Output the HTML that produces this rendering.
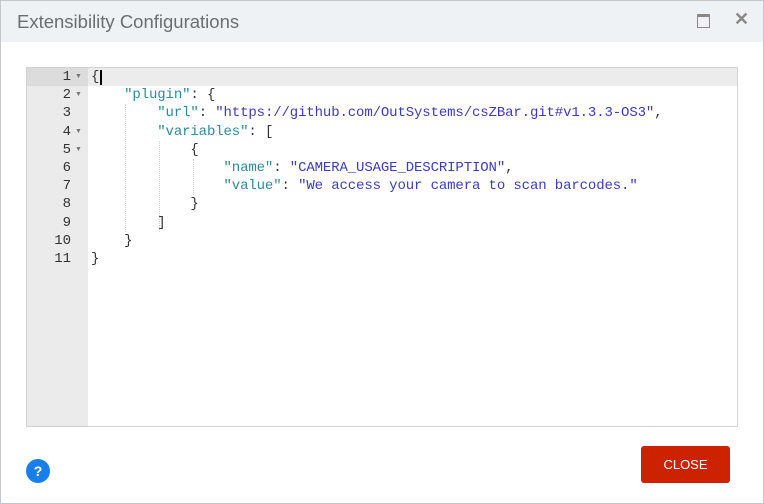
<!DOCTYPE html>
<html><head><style>
html,body{margin:0;padding:0;width:764px;height:504px;overflow:hidden;background:#fff;font-family:"Liberation Sans",sans-serif}
.frame{position:absolute;left:0;top:0;width:762px;height:502px;border:1px solid #c4c8cc;background:#fff}
.hdr{position:absolute;left:0;top:0;width:762px;height:41px;background:#eef2f5}
.title{position:absolute;left:16px;top:10px;font-size:18.5px;color:#6b6f73}
.ed{position:absolute;left:25px;top:66px;width:710px;height:358px;border:1px solid #cfd3d6;background:#fff;overflow:hidden}
.gut{position:absolute;left:0;top:0;width:61px;height:100%;background:#ebebeb}
.act{position:absolute;left:0;top:0;width:100%;height:18px;background:#ececec}
.ln{position:absolute;left:0;width:44px;text-align:right;font:14px/18.2px "Liberation Mono",monospace;color:#333}
.fold{position:absolute;left:48px;font-size:7px;color:#777}
pre{position:absolute;left:64px;top:0;margin:0;font:14px/18.2px "Liberation Mono",monospace;color:#333;letter-spacing:-0.12px}
.k{color:#2c8a99}.s{color:#3b3bbd}
.g{position:absolute;border-left:1px dotted #d0d0d0}
.btn{position:absolute;left:640px;top:445px;width:89px;height:37px;background:#cc2200;border-radius:3px;color:#fff;font-size:13px;text-align:center;line-height:37px}
.help{position:absolute;left:25px;top:458px;width:24px;height:24px;border-radius:50%;background:#1a7ee8;color:#fff;font-weight:bold;font-size:14px;text-align:center;line-height:24px}
</style></head><body>
<div class="frame">
<div class="hdr"><div class="title">Extensibility Configurations</div>
<div style="position:absolute;left:696px;top:13px;width:11px;height:10px;border:1px solid #888;border-top-width:3px"></div>
<div style="position:absolute;left:733px;top:8px;font-size:18px;font-weight:bold;color:#888">✕</div>
</div>
<div class="ed">
<div class="act"></div>
<div class="gut"></div>
<div class="ln" style="top:0;background:#dcdcdc;width:61px;text-align:left"><span style="display:inline-block;width:44px;text-align:right">1</span></div>
<div class="ln" style="top:18.2px">2</div><div class="ln" style="top:36.4px">3</div><div class="ln" style="top:54.6px">4</div><div class="ln" style="top:72.8px">5</div><div class="ln" style="top:91px">6</div><div class="ln" style="top:109.2px">7</div><div class="ln" style="top:127.4px">8</div><div class="ln" style="top:145.6px">9</div><div class="ln" style="top:163.8px">10</div><div class="ln" style="top:182px">11</div>
<div class="fold" style="top:5px">▼</div><div class="fold" style="top:23px">▼</div><div class="fold" style="top:60px">▼</div><div class="fold" style="top:78px">▼</div>
<div class="g" style="left:98px;top:36px;height:128px"></div>
<div class="g" style="left:132px;top:73px;height:91px"></div>
<div class="g" style="left:166px;top:91px;height:36px"></div>
<div style="position:absolute;left:73px;top:2px;width:2px;height:15px;background:#000"></div>
<pre>{
    <span class="k">"plugin"</span>: {
        <span class="k">"url"</span>: <span class="s">"https://github.com/OutSystems/csZBar.git#v1.3.3-OS3"</span>,
        <span class="k">"variables"</span>: [
            {
                <span class="k">"name"</span>: <span class="s">"CAMERA_USAGE_DESCRIPTION"</span>,
                <span class="k">"value"</span>: <span class="s">"We access your camera to scan barcodes."</span>
            }
        ]
    }
}</pre>
</div>
<div class="help">?</div>
<div class="btn">CLOSE</div>
</div>
</body></html>
